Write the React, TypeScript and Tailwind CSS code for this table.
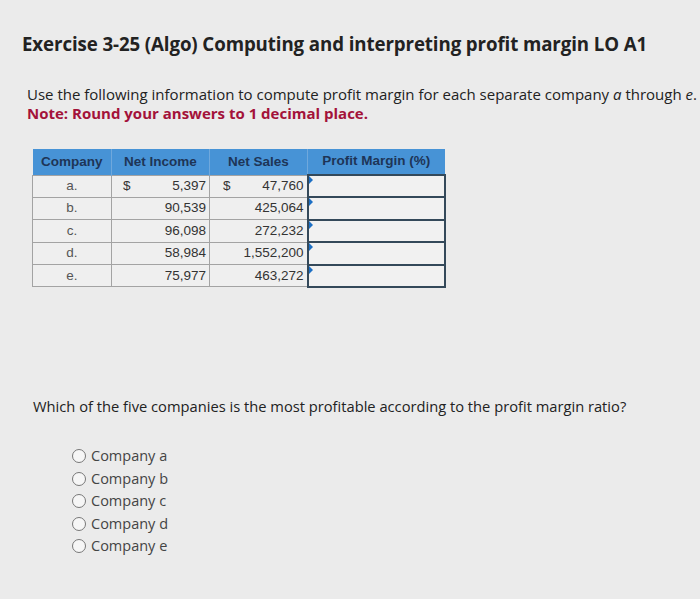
import { useState } from 'react';

const rows = [
  { id: 'a.', income: '5,397', sales: '47,760', dollar: true },
  { id: 'b.', income: '90,539', sales: '425,064' },
  { id: 'c.', income: '96,098', sales: '272,232' },
  { id: 'd.', income: '58,984', sales: '1,552,200' },
  { id: 'e.', income: '75,977', sales: '463,272' },
];

const choices = ['Company a', 'Company b', 'Company c', 'Company d', 'Company e'];

export default function App() {
  const [picked, setPicked] = useState<string | null>(null);

  return (
    <main className="w-[700px] h-[599px] overflow-hidden bg-[#ebebeb] text-[#222] font-['Open_Sans',sans-serif]">
      {/* Title */}
      <h1 className="pl-[22px] pt-[31px] text-[18.7px] font-bold leading-[26px] tracking-[-0.1px]">
        Exercise 3-25 (Algo) Computing and interpreting profit margin LO A1
      </h1>

      {/* Instructions */}
      <div className="pl-[27px] pt-[28px] text-[15px] leading-[19px] whitespace-nowrap">
        <p>
          Use the following information to compute profit margin for each separate company <i>a</i> through <i>e</i>.
        </p>
        <p className="font-bold text-[#a3123a]">Note: Round your answers to 1 decimal place.</p>
      </div>

      {/* Table */}
      <div className="pl-[32px] pt-[26px]">
        <table className="border-collapse font-['Liberation_Sans',sans-serif] text-[13.5px]">
          <thead>
            <tr className="h-[26px] bg-[#4793d6] text-[#1e3557] font-bold">
              <th className="w-[79px] border-r border-[#6fa8dc] font-bold">Company</th>
              <th className="w-[98px] border-r border-[#6fa8dc] font-bold">Net Income</th>
              <th className="w-[98px] border-r border-[#6fa8dc] font-bold">Net Sales</th>
              <th className="w-[137px] font-bold">Profit Margin (%)</th>
            </tr>
          </thead>
          <tbody>
            {rows.map((r) => (
              <tr key={r.id} className="h-[22.4px] bg-[#efefef] text-[#333]">
                <td className="border border-[#a3a3a3] text-center text-[#555]">{r.id}</td>
                <td className="border border-[#a3a3a3] px-[3px]">
                  <div className="flex justify-between">
                    <span className="pl-[8px]">{r.dollar ? '$' : ''}</span>
                    <span>{r.income}</span>
                  </div>
                </td>
                <td className="border border-[#a3a3a3] px-[3px]">
                  <div className="flex justify-between">
                    <span className="pl-[10px]">{r.dollar ? '$' : ''}</span>
                    <span>{r.sales}</span>
                  </div>
                </td>
                <td className="relative border-2 border-[#34495a] bg-[#f1f1f1] p-0">
                  <span className="absolute left-0 top-0 h-0 w-0 border-l-[4px] border-t-[4px] border-b-[4px] border-l-[#1c6fc4] border-t-transparent border-b-transparent"></span>
                  <input className="h-full w-full bg-transparent outline-none" aria-label={`Profit margin ${r.id}`} />
                </td>
              </tr>
            ))}
          </tbody>
        </table>
      </div>

      {/* Question */}
      <p className="pl-[33px] pt-[109px] text-[14.7px] leading-[18px] whitespace-nowrap">
        Which of the five companies is the most profitable according to the profit margin ratio?
      </p>

      {/* Choices */}
      <div className="pl-[72px] pt-[30px] flex flex-col text-[14.5px] text-[#444]">
        {choices.map((c) => (
          <label key={c} className="flex items-center gap-[5px] h-[22.5px] cursor-pointer">
            <input
              type="radio"
              name="most"
              checked={picked === c}
              onChange={() => setPicked(c)}
              className="appearance-none w-[14px] h-[14px] rounded-full border border-[#777] bg-[#f6f6f6] checked:bg-[#2b6cb0]"
            />
            <span>{c}</span>
          </label>
        ))}
      </div>
    </main>
  );
}
